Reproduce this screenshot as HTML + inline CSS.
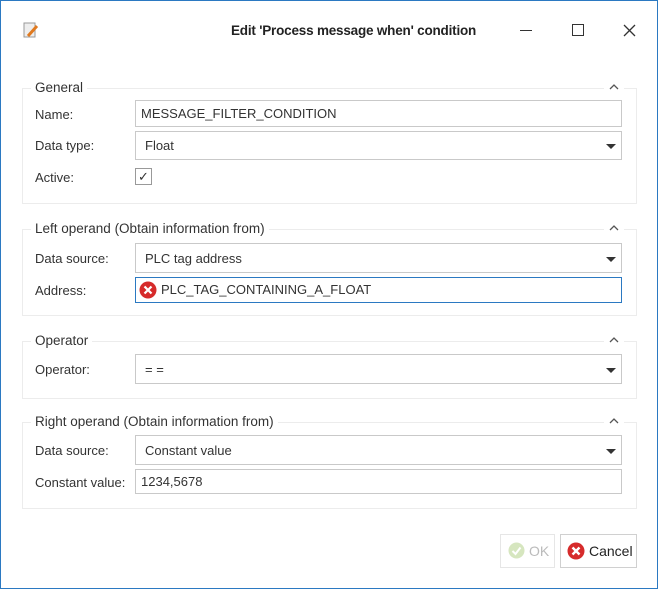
<!DOCTYPE html><html><head><style>
body{margin:0;width:658px;height:589px;overflow:hidden;background:#fff;font-family:"Liberation Sans",sans-serif;font-size:13px;color:#333}
.win{position:absolute;left:0;top:0;width:656px;height:587px;border:1px solid #2b79c2;background:#fff}
.a{position:absolute}
.grp{position:absolute;left:21px;width:613px;border:1px solid #ececec}
.gt{position:absolute;background:#fff;padding:0 4px;left:8px;top:-9px;color:#333;font-size:13.5px}
.car{position:absolute;right:12px;top:-7px;background:#fff;padding:0 3px;height:10px}
.lbl{position:absolute;left:34px}
.in{position:absolute;left:134px;width:487px;border:1px solid #c9c9c9;background:#fff;box-sizing:border-box;padding-left:9px;line-height:24px}
.dd:after{content:"";position:absolute;right:5px;top:45%;border-left:5px solid transparent;border-right:5px solid transparent;border-top:5px solid #333}
.btn{position:absolute;top:533px;height:34px;border:1px solid #d0d0d0;box-sizing:border-box;background:#fff;font-size:14px;line-height:32px}
</style></head><body><div class="win">
<svg class="a" style="left:21px;top:20px" width="18" height="18"><rect x="2" y="2" width="11" height="14" fill="#eee" stroke="#999"/><path d="M6 15 L15 5" stroke="#e07a20" stroke-width="3"/></svg>
<div class="a" style="left:230px;top:22px;font-weight:bold;font-size:13.5px;color:#222;letter-spacing:-0.2px">Edit 'Process message when' condition</div>
<div class="a" style="left:519px;top:29px;width:12px;height:1px;background:#333"></div>
<div class="a" style="left:571px;top:23px;width:10px;height:10px;border:1px solid #333"></div>
<svg class="a" style="left:622px;top:23px" width="13" height="13"><path d="M1 1L12 12M12 1L1 12" stroke="#333" stroke-width="1.3"/></svg>

<div class="grp" style="top:87px;height:114px"><span class="gt">General</span><svg class="car" width="14" height="10"><path d="M3 7L7 3L11 7" stroke="#555" fill="none" stroke-width="1.3"/></svg></div>
<div class="lbl" style="top:106px">Name:</div><div class="in" style="top:99px;height:27px;padding-left:5px;line-height:25px">MESSAGE_FILTER_CONDITION</div>
<div class="lbl" style="top:137px">Data type:</div><div class="in dd" style="top:130px;height:29px;line-height:28px">Float</div>
<div class="lbl" style="top:169px">Active:</div>
<div class="a" style="left:134px;top:167px;width:15px;height:15px;border:1px solid #999;text-align:center;font-size:13px;line-height:15px">✓</div>

<div class="grp" style="top:228px;height:85px"><span class="gt">Left operand (Obtain information from)</span><svg class="car" width="14" height="10"><path d="M3 7L7 3L11 7" stroke="#555" fill="none" stroke-width="1.3"/></svg></div>
<div class="lbl" style="top:250px">Data source:</div><div class="in dd" style="top:242px;height:30px;line-height:29px">PLC tag address</div>
<div class="lbl" style="top:282px">Address:</div><div class="in" style="top:276px;height:26px;border-color:#2b79c2;padding-left:25px;line-height:24px">PLC_TAG_CONTAINING_A_FLOAT
<svg class="a" style="left:3px;top:3px" width="18" height="18"><circle cx="9" cy="9" r="8.5" fill="#d62b2b"/><path d="M5.5 5.5L12.5 12.5M12.5 5.5L5.5 12.5" stroke="#fff" stroke-width="2.2"/></svg></div>

<div class="grp" style="top:340px;height:56px"><span class="gt">Operator</span><svg class="car" width="14" height="10"><path d="M3 7L7 3L11 7" stroke="#555" fill="none" stroke-width="1.3"/></svg></div>
<div class="lbl" style="top:361px">Operator:</div><div class="in dd" style="top:353px;height:30px;line-height:29px">= =</div>

<div class="grp" style="top:421px;height:85px"><span class="gt">Right operand (Obtain information from)</span><svg class="car" width="14" height="10"><path d="M3 7L7 3L11 7" stroke="#555" fill="none" stroke-width="1.3"/></svg></div>
<div class="lbl" style="top:442px">Data source:</div><div class="in dd" style="top:434px;height:30px;line-height:29px">Constant value</div>
<div class="lbl" style="top:474px">Constant value:</div><div class="in" style="top:468px;height:25px;line-height:23px;padding-left:5px">1234,5678</div>

<div class="btn" style="left:499px;width:55px;color:#bbb;border-color:#e6e6e6"><svg class="a" style="left:7px;top:7px" width="17" height="17"><circle cx="8.5" cy="8.5" r="8" fill="#d6e6bf"/><path d="M4.5 9L7.5 12L12.5 5.5" stroke="#fff" stroke-width="2" fill="none"/></svg><span style="position:absolute;left:28px">OK</span></div>
<div class="btn" style="left:559px;width:77px;color:#222"><svg class="a" style="left:6px;top:7px" width="18" height="18"><circle cx="9" cy="9" r="8.5" fill="#d62b2b"/><path d="M5.5 5.5L12.5 12.5M12.5 5.5L5.5 12.5" stroke="#fff" stroke-width="2.4"/></svg><span style="position:absolute;left:28px">Cancel</span></div>
</div></body></html>
